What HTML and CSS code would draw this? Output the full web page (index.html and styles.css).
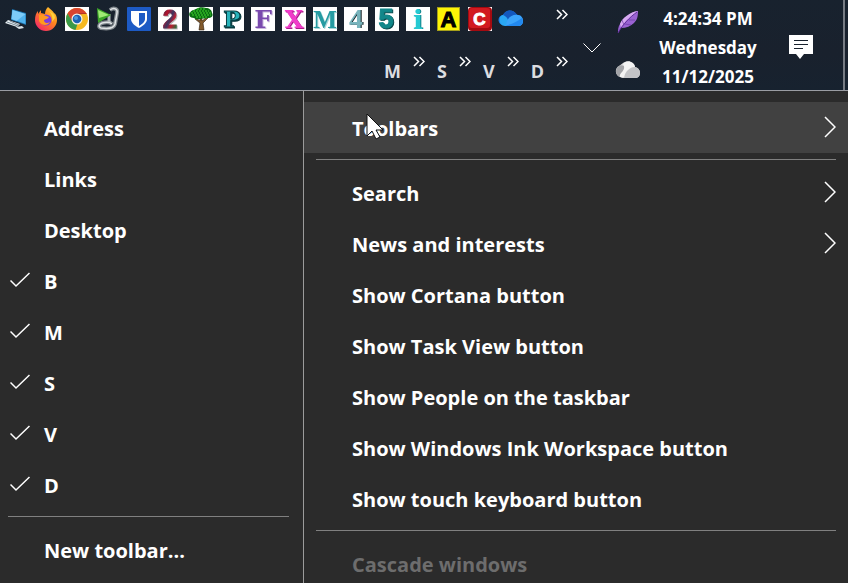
FILE: index.html
```
<!DOCTYPE html>
<html lang="en">
<head>
	<meta charset="utf-8">
	<title>Taskbar</title>
	<link rel="stylesheet" href="styles.css">
</head>

<body>

	<!-- shared shapes -->
	<svg class="defs" width="0" height="0" aria-hidden="true">
		<symbol id="more" viewBox="0 0 12 11"><path d="M1 1l4.500 4.500L1 10M6.500 1L11 5.500 6.500 10"/></symbol>
		<symbol id="check" viewBox="0 0 20 16"><path d="M.5 8.500L6 14 19.500 1"/></symbol>
		<symbol id="arrow" viewBox="0 0 12 22"><path d="M1 1l10 10L1 21"/></symbol>
	</svg>

	<header class="taskbar">
		<div class="toolbars">
			<div class="quick">
				<button class="app" aria-label="This PC">
					<svg viewBox="0 0 24 24">
						<path d="M9 2l14 4v12L8 13z" fill="#1b6fa8"/>
						<path d="M9.500 3l13 4v10L8.500 12z" fill="#4fb2ee"/>
						<path d="M9.500 3l13 4-9 7-5-2z" fill="#7ccbf8"/>
						<path d="M5 13l12 4-3 3-12-4z" fill="#e8eef2"/>
						<path d="M4 15l11 4M7 14l9 4" stroke="#7c8c98" fill="none"/>
						<path d="M13 20l6-1 2 2-5 1z" fill="#dce4ea"/>
					</svg>
				</button>
				<button class="app" aria-label="Firefox">
					<svg viewBox="0 0 24 24">
						<linearGradient id="fox" x1="1" y1="0" x2=".2" y2="1">
							<stop offset="0" stop-color="#ffe03a"/><stop offset=".45" stop-color="#ff8a1c"/><stop offset="1" stop-color="#f5246a"/>
						</linearGradient>
						<path d="M14 0c2 2 5 4 6 6 2 1 3 4 3 7a11 11 0 0 1-22 0c0-4 1-7 3-9v3l3-4v3l4 1c0-3 1-5 3-7z" fill="url(#fox)"/>
						<circle cx="12" cy="13" r="5.500" fill="#7b3be0"/>
						<path d="M5 8c3-1 5 0 7 1l3 1c-1 2-4 2-5 3 0 3 3 4 6 2-2 4-9 4-11-1z" fill="#ff9a1f"/>
						<path d="M15 4c3 3 4 7 3 11l3-4c0-4-3-5-6-7z" fill="#ffd23a"/>
					</svg>
				</button>
				<button class="app" aria-label="Chrome">
					<svg viewBox="0 0 24 24">
						<path d="M0 0h24v24H0z" fill="#fff"/>
						<circle cx="12" cy="12" r="11" fill="#f5b921"/>
						<path d="M2.500 6.500a11 11 0 0 1 19 0L12 8l-5 7z" fill="#d9432f"/>
						<path d="M2.500 6.500L7.500 15l5 2-2 6a11 11 0 0 1-8-16.500z" fill="#3a9a48"/>
						<path d="M12 6.500h9.500" stroke="#b83424"/>
						<circle cx="12" cy="12" r="5.500" fill="#f3f3ea"/>
						<circle cx="12" cy="12" r="4.300" fill="#1e62b4"/>
						<circle cx="11" cy="11" r="2" fill="#4f98dc"/>
					</svg>
				</button>
				<button class="app" aria-label="Links">
					<svg viewBox="0 0 24 24">
						<path d="M14 3c4-3 8-1 7 3l-2 11c-1 4-7 5-14 4-3-1-2-4 1-5 4-1 8-1 10 1" fill="none" stroke="#7f878c" stroke-width="4"/>
						<path d="M14 3c4-3 8-1 7 3l-2 11c-1 4-7 5-14 4-3-1-2-4 1-5 4-1 8-1 10 1" fill="none" stroke="#dfe3e5" stroke-width="1.500"/>
						<path d="M13 7v8" stroke="#b4babd" stroke-width="3"/>
						<path d="M1 1l14 7L2 16z" fill="#3da52a"/>
						<path d="M2 3l11 5-10 3z" fill="#a0ec75"/>
					</svg>
				</button>
				<button class="app" aria-label="Bitwarden">
					<svg viewBox="0 0 24 24">
						<rect width="24" height="24" rx="1" fill="#1d5ac4"/>
						<path d="M4 4h16v8c0 4-4 7-8 9-4-2-8-5-8-9z" fill="#fff"/>
						<path d="M12 6h6v6c0 3-3 5-6 7z" fill="#1d5ac4"/>
					</svg>
				</button>
				<button class="app tile two">
					<svg viewBox="0 0 24 24">
						<linearGradient id="plaid" x1="0" y1="0" x2="1" y2="1">
							<stop offset=".1" stop-color="#3b2c48"/><stop offset=".3" stop-color="#b5122c"/><stop offset=".5" stop-color="#3a3560"/><stop offset=".65" stop-color="#c01c30"/><stop offset=".85" stop-color="#2e6b3a"/>
						</linearGradient>
						<text class="sans" x="12" y="21" font-size="26" fill="url(#plaid)" stroke="url(#plaid)">2</text>
					</svg>
				</button>
				<button class="app tile" aria-label="Tree">
					<svg viewBox="0 0 24 24">
						<path d="M10 23l1-7-5-4 1-1 4 3V9h2v5l5-4 1 1-5 5 1 7z" fill="#81592b" stroke="#2c1c0c" stroke-width=".6"/>
						<path d="M1 6c1-3 4-3 6-4 3-2 7-2 10-1 3 0 6 2 6 5 2 3-1 5-4 5-3 1-5 0-7 1-3 0-5 1-7-1-4 0-6-3-4-6z" fill="#0a6d12"/>
						<path d="M4 4h16M2 6h20M3 8h19M7 10h12M8 2h9" stroke="#40d82d" stroke-width="1" stroke-dasharray="2 1"/>
					</svg>
				</button>
				<button class="app tile p">
					<svg viewBox="0 0 24 24">
						<text class="slab" x="12" y="20" font-size="23" fill="#27b3ba" stroke="#083b40">P</text>
					</svg>
				</button>
				<button class="app tile f">
					<svg viewBox="0 0 24 24">
						<text class="slab" x="12" y="21" font-size="25" fill="#7a4aae">F</text>
					</svg>
				</button>
				<button class="app tile x">
					<svg viewBox="0 0 24 24">
						<text class="slab" x="12" y="21" font-size="24" fill="#f03cc9">X</text>
					</svg>
				</button>
				<button class="app tile m">
					<svg viewBox="0 0 24 24">
						<text class="serif" x="12" y="21" font-size="25" fill="#269ba2">M</text>
					</svg>
				</button>
				<button class="app tile four">
					<svg viewBox="0 0 24 24">
						<text class="serif" x="12" y="21" font-size="28" fill="#78b4bc">4</text>
					</svg>
				</button>
				<button class="app tile five">
					<svg viewBox="0 0 24 24">
						<text class="sans" x="11" y="21" font-size="27" fill="#12878a" stroke="#12878a">5</text>
					</svg>
				</button>
				<button class="app tile i">
					<svg viewBox="0 0 24 24">
						<text class="slab" x="12" y="22" font-size="26" fill="#25c9d2">i</text>
					</svg>
				</button>
				<button class="app">
					<svg viewBox="0 0 24 24">
						<rect x=".5" y=".5" width="22" height="23" fill="#fdf406" stroke="#a6a01a"/>
						<text class="sans" x="11.500" y="20" font-size="22" fill="#000" stroke="#000">A</text>
					</svg>
				</button>
				<button class="app tile">
					<svg viewBox="0 0 24 24">
						<rect width="24" height="24" rx="4" fill="#a40a10"/>
						<rect x="1" y="1" width="21" height="20" rx="3" fill="#d11920"/>
						<text class="sans" x="11.500" y="18" font-size="17" fill="#fff" stroke="#fff">C</text>
					</svg>
				</button>
				<button class="app" aria-label="OneDrive">
					<svg viewBox="0 0 24 24">
						<path d="M5 18a5 5 0 0 1-1-10C6 3 14 1 18 8c4 0 6 3 6 6s-2 5-5 5H7z" fill="#1577e0"/>
						<path d="M1 10c3-4 7-2 10 0l8 9H6c-5 0-6-5-5-9z" fill="#2aa7f4"/>
						<path d="M4 8C7 2 15 2 18 8c-4 0-7 2-9 5-1-3-3-4-5-5z" fill="#1458bd"/>
						<path d="M7 18c1-7 6-11 12-10 3 0 5 3 5 6s-2 5-5 5H8z" fill="#3ba4fa"/>
						<path d="M7 18c5 0 10-3 16-7 2 4 0 8-4 8H8z" fill="#2288ee"/>
					</svg>
				</button>
				<button class="more" aria-label="More apps"><svg><use href="#more"/></svg></button>
			</div>
			<div class="folders">
				<div class="folder"><span>M</span><button class="more" aria-label="More in M"><svg><use href="#more"/></svg></button></div>
				<div class="folder"><span>S</span><button class="more" aria-label="More in S"><svg><use href="#more"/></svg></button></div>
				<div class="folder"><span>V</span><button class="more" aria-label="More in V"><svg><use href="#more"/></svg></button></div>
				<div class="folder"><span>D</span><button class="more" aria-label="More in D"><svg><use href="#more"/></svg></button></div>
			</div>
		</div>

		<button class="overflow" aria-label="Show hidden icons">
			<svg viewBox="0 0 18 10"><path d="M.5 .5L9 9l8.500-8.500"/></svg>
		</button>

		<div class="tray">
			<button class="app" aria-label="Feather">
				<svg viewBox="0 0 24 24">
					<path d="M2 23c0-3 0-6 2-9C8 8 15 2 22 1c0 6-1 9-4 12-3 3-8 5-13 5z" fill="#9a62d2"/>
					<path d="M22 1C14 2 6 8 4 14l1 4C9 11 16 6 22 1z" fill="#d7a9f2"/>
					<path d="M2 23C7 14 14 7 21 2" fill="none" stroke="#5c2b96"/>
					<path d="M9 14l6 1M13 10l6 0M6 10l2 5" stroke="#6c3ca5" stroke-width=".7"/>
				</svg>
			</button>
			<button class="app" aria-label="Weather">
				<svg viewBox="0 0 24 24">
					<path d="M4 19a6 6 0 0 1-1-11l4-3c5-4 11-1 12 4 4 1 5 4 5 6 0 3-2 5-5 5H6z" fill="#d9d9da"/>
					<path d="M1 10c2-4 6-3 9-1l-6 10c-4-2-5-6-3-9z" fill="#a2a3a7"/>
					<path d="M7 6c4-5 12-2 12 3-4 0-7 3-10 10H4c-1-5 7-6 3-13z" fill="#f3f3f3"/>
					<path d="M8 20c1-7 6-11 11-11 4 1 5 4 5 6 0 3-2 5-5 5z" fill="#c3c4c7"/>
				</svg>
			</button>
		</div>

		<button class="clock">
			<span>4:24:34 PM</span>
			<span>Wednesday</span>
			<span>11/12/2025</span>
		</button>

		<button class="notify" aria-label="Notifications">
			<svg viewBox="0 0 24 24">
				<path d="M0 0h24v19H15l-4 5-4-5H0z" fill="#fff"/>
				<path d="M5 5.500h14M5 9.500h14M5 13.500h9" stroke="#18212d"/>
			</svg>
		</button>
		<button class="desktop" aria-label="Show desktop"></button>
	</header>

	<main class="menus">
		<div class="menu submenu" role="menu">
			<button class="item" role="menuitem">Address</button>
			<button class="item" role="menuitem">Links</button>
			<button class="item" role="menuitem">Desktop</button>
			<button class="item" role="menuitemcheckbox" aria-checked="true"><svg class="check"><use href="#check"/></svg>B</button>
			<button class="item" role="menuitemcheckbox" aria-checked="true"><svg class="check"><use href="#check"/></svg>M</button>
			<button class="item" role="menuitemcheckbox" aria-checked="true"><svg class="check"><use href="#check"/></svg>S</button>
			<button class="item" role="menuitemcheckbox" aria-checked="true"><svg class="check"><use href="#check"/></svg>V</button>
			<button class="item" role="menuitemcheckbox" aria-checked="true"><svg class="check"><use href="#check"/></svg>D</button>
			<hr>
			<button class="item" role="menuitem">New toolbar...</button>
		</div>

		<div class="menu context" role="menu">
			<button class="item active" role="menuitem">Toolbars<svg class="arrow"><use href="#arrow"/></svg></button>
			<hr>
			<button class="item" role="menuitem">Search<svg class="arrow"><use href="#arrow"/></svg></button>
			<button class="item" role="menuitem">News and interests<svg class="arrow"><use href="#arrow"/></svg></button>
			<button class="item" role="menuitem">Show Cortana button</button>
			<button class="item" role="menuitem">Show Task View button</button>
			<button class="item" role="menuitem">Show People on the taskbar</button>
			<button class="item" role="menuitem">Show Windows Ink Workspace button</button>
			<button class="item" role="menuitem">Show touch keyboard button</button>
			<hr>
			<button class="item" role="menuitem" disabled>Cascade windows</button>

			<svg class="cursor" viewBox="0 0 18 27">
				<path d="M1 1v22l5-5 4 8 4-2-4-7h7z" fill="#fff" stroke="#111"/>
			</svg>
		</div>
	</main>

</body>
</html>
```
FILE: styles.css
```
* {
	box-sizing: border-box;
	margin: 0;
	padding: 0;
}
body {
	display: flex;
	flex-direction: column;
	height: 100vh;
	overflow: hidden;
	background-color: #2b2b2b;
	color: #fff;
	font-family: "Open Sans", "Noto Sans", sans-serif;
}
button {
	border: 0;
	background: none;
	color: inherit;
	font: inherit;
}
svg {
	display: block;
	overflow: visible;
	fill: none;
}
.defs {
	position: absolute;
}

/* taskbar */
.taskbar {
	display: flex;
	flex: none;
	align-items: center;
	height: 91px;
	border-bottom: 1px solid #9a9ca2;
	background: linear-gradient(#18222e, #19212d 60%, #17222f);
}
.toolbars {
	display: flex;
	flex: 1;
	flex-direction: column;
	align-self: stretch;
	padding: 7px 0 0 3px;
}
.quick {
	display: flex;
	gap: 7px;
	height: 50px;
}
.quick .more {
	margin-left: auto;
	padding-top: 2px;
}
.app,
.app svg {
	width: 24px;
	height: 24px;
}
.tile {
	background-color: #fff;
}
.app text {
	font-weight: bold;
	text-anchor: middle;
}
.app .sans {
	font-family: "Liberation Sans", sans-serif;
}
.app .serif {
	font-family: "Liberation Serif", serif;
}
.app .slab {
	font-family: "DejaVu Serif", serif;
}
/* raised letters */
.two text {
	filter: drop-shadow(1px 1px 0 #bbb);
}
.p text {
	filter: drop-shadow(1px 1px 0 #083b40);
}
.f text {
	filter: drop-shadow(1px 1px 0 #c9b8dc);
}
.x text {
	filter: drop-shadow(1px 1px 0 #a81d8a);
}
.m text {
	filter: drop-shadow(1px 1px 0 #a9d6d9);
}
.four text {
	filter: drop-shadow(1px 0 0 #101c20);
}
.five text {
	filter: drop-shadow(1px 1px 0 #08494c);
}
.i text {
	filter: drop-shadow(1px 0 0 #128088);
}
.more {
	align-self: flex-start;
}
.more svg {
	width: 12px;
	height: 11px;
	stroke: #fff;
	stroke-width: 1.5;
}
.folders {
	display: flex;
	justify-content: flex-end;
	gap: 12px;
}
.folder {
	display: flex;
	gap: 12px;
	color: #dcdde0;
	font-size: 18px;
	font-weight: 700;
	line-height: 28px;
}
.folder .more {
	margin-top: -1px;
}
.overflow {
	margin: 6px 15px 0 15px;
}
.overflow svg {
	width: 18px;
	height: 10px;
	stroke: #fff;
}
.tray {
	display: flex;
	flex-direction: column;
	gap: 24px;
	padding-top: 2px;
}
.clock {
	display: flex;
	flex-direction: column;
	width: 136px;
	padding-top: 4px;
	font-size: 17px;
	font-weight: 700;
	line-height: 29px;
	text-align: center;
}
.notify {
	padding: 4px 30px 0 13px;
}
.notify svg {
	width: 24px;
	height: 24px;
}
.desktop {
	align-self: stretch;
	width: 5px;
	border-left: 2px solid #777c84;
}

/* menus */
.menus {
	display: flex;
	flex: 1;
}
.menu {
	position: relative;
	padding-top: 11px;
}
.submenu {
	width: 304px;
	border-right: 1px solid #9b9b9b;
}
.context {
	flex: 1;
}
.item {
	display: flex;
	align-items: center;
	width: 100%;
	height: 51px;
	padding: 2px 12px 0 48px;
	font-size: 20px;
	font-weight: 700;
	text-align: left;
}
.submenu .item {
	padding-left: 44px;
}
.active {
	background-color: #414141;
}
.item:disabled {
	color: #6d6d6d;
}
.menu hr {
	height: 1px;
	margin: 6px 12px 7px;
	border: 0;
	background-color: #808080;
}
.submenu hr {
	margin-right: 14px;
	margin-left: 8px;
}
.check {
	width: 20px;
	height: 16px;
	margin: 0 14px 4px -34px;
	stroke: #fff;
	stroke-width: 1.5;
}
.arrow {
	width: 12px;
	height: 22px;
	margin-bottom: 4px;
	margin-left: auto;
	stroke: #fff;
	stroke-width: 1.5;
}
.cursor {
	position: absolute;
	top: 22px;
	left: 62px;
	width: 18px;
	height: 27px;
}
```
